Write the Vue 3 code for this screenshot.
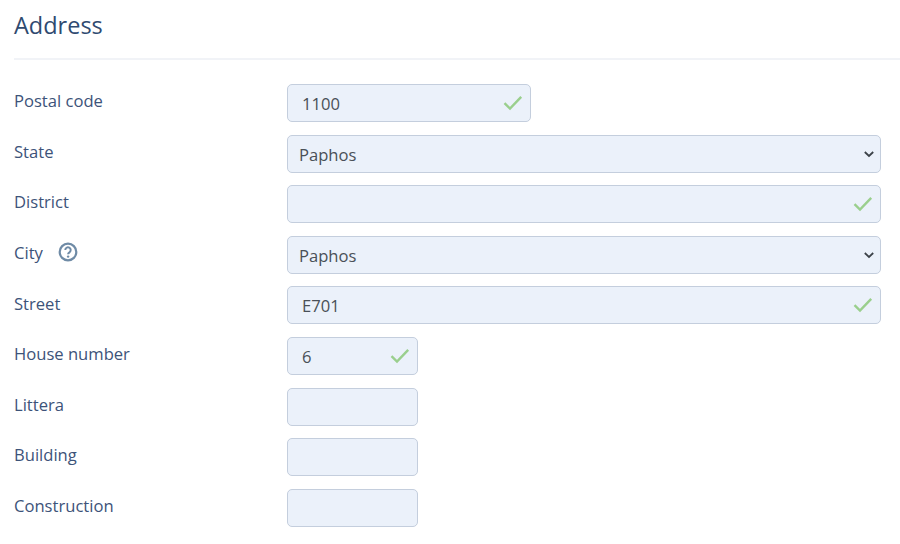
<script setup>
const rows = [
  { label: 'Postal code', value: '1100', size: 'md', check: true },
  { label: 'State', value: 'Paphos', select: true },
  { label: 'District', value: '', check: true },
  { label: 'City', value: 'Paphos', select: true, help: true },
  { label: 'Street', value: 'E701', check: true },
  { label: 'House number', value: '6', size: 'sm', check: true },
  { label: 'Littera', value: '', size: 'sm' },
  { label: 'Building', value: '', size: 'sm' },
  { label: 'Construction', value: '', size: 'sm' },
]
</script>

<template>
  <div class="page">
    <h1 class="title">Address</h1>
    <div class="form">
      <template v-for="row in rows" :key="row.label">
        <div class="label">
          <span>{{ row.label }}</span>
          <svg v-if="row.help" class="help" width="20" height="20" viewBox="0 0 20 20">
            <circle cx="10" cy="10" r="8.3" fill="none" stroke="#6f8ba6" stroke-width="2.2" />
            <path d="M7.3 8.1a2.7 2.7 0 1 1 4.2 2.2c-.9.6-1.4 1-1.4 2" fill="none" stroke="#6f8ba6" stroke-width="2" />
            <circle cx="10.1" cy="14.6" r="1.2" fill="#6f8ba6" />
          </svg>
        </div>
        <div class="field" :class="row.size">
          <span class="text" :class="{ plain: row.select }">{{ row.value }}</span>
          <svg v-if="row.check" class="check" width="20" height="16" viewBox="0 0 20 16">
            <path d="M1.5 8.2 7 13.6 18.2 1.8" fill="none" stroke="#9acf8d" stroke-width="2.4" />
          </svg>
          <svg v-if="row.select" class="chevron" width="12" height="8" viewBox="0 0 12 8">
            <path d="M1.8 2 6 6l4.2-4" fill="none" stroke="#3c4248" stroke-width="1.8" />
          </svg>
        </div>
      </template>
    </div>
  </div>
</template>

<style scoped>
.page {
  width: 900px;
  height: 544px;
  box-sizing: border-box;
  padding: 9px 0 0 14px;
  overflow: hidden;
  background: #fff;
  font-family: "Open Sans", "Noto Sans", sans-serif;
}
.title {
  margin: 0;
  height: 49px;
  border-bottom: 2px solid #f1f3f7;
  box-sizing: content-box;
  font-size: 23.5px;
  font-weight: 400;
  line-height: 33px;
  color: #2f4a70;
}
.form {
  display: grid;
  grid-template-columns: 273px 594px;
  grid-auto-rows: 38px;
  row-gap: 12.6px;
  margin-top: 24px;
}
.label {
  display: flex;
  align-items: center;
  gap: 15px;
  height: 33.4px;
  font-size: 16.6px;
  color: #3d5379;
}
.help {
  flex: none;
}
.field {
  position: relative;
  display: flex;
  align-items: center;
  box-sizing: border-box;
  width: 594px;
  height: 38px;
  padding: 1px 14px 0;
  border: 1px solid #c4cedd;
  border-radius: 5px;
  background: #ebf1fa;
  font-size: 16.6px;
  color: #495057;
}
.field.md {
  width: 244px;
}
.field.sm {
  width: 131px;
}
.text.plain {
  margin-left: -3px;
}
.check {
  position: absolute;
  right: 7px;
  top: 10px;
}
.chevron {
  position: absolute;
  right: 5px;
  top: 14px;
}
</style>
